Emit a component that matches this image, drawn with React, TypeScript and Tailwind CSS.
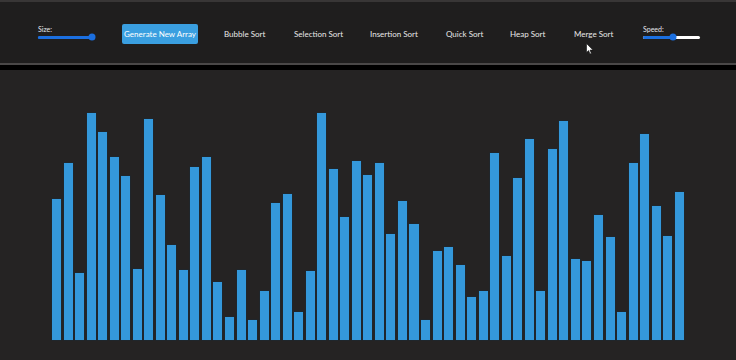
import React from "react";

const heights = [
  141, 177, 67, 227, 208, 183, 164, 71, 221, 145, 95, 70, 173, 183, 58, 23, 70, 20, 49, 137,
  146, 28, 69, 227, 171, 123, 179, 165, 177, 106, 139, 116, 20, 89, 93, 75, 43, 49, 187, 84,
  162, 201, 49, 191, 219, 81, 79, 125, 103, 28, 177, 206, 134, 104, 148,
];

// label + width of each nav item as laid out in the bar
const algorithms: [string, string][] = [
  ["Bubble Sort", "w-[40px]"],
  ["Selection Sort", "w-[46px]"],
  ["Insertion Sort", "w-[46px]"],
  ["Quick Sort", "w-[34px]"],
  ["Heap Sort", "w-[34px]"],
  ["Merge Sort", "w-[38px]"],
];

function Slider({ label, percent, fill }: { label: string; percent: number; fill: boolean }) {
  return (
    <div className="mb-[4px] flex w-[57px] flex-col gap-[3px]">
      <span className="text-[7px] leading-[8px] text-gray-200">{label}</span>
      <div className={`relative h-[3px] rounded-full ${fill ? "bg-[#1b6fe0]" : "bg-white"}`}>
        <div className="absolute inset-y-0 left-0 rounded-full bg-[#1b6fe0]" style={{ width: `${percent}%` }} />
        <div
          className="absolute top-1/2 h-[7px] w-[7px] -translate-x-1/2 -translate-y-1/2 rounded-full bg-[#1b6fe0]"
          style={{ left: `${percent}%` }}
        />
      </div>
    </div>
  );
}

export default function App() {
  return (
    <div className="relative h-[360px] w-[736px] overflow-hidden bg-[#252323]" style={{ fontFamily: "Lato, 'Noto Sans', sans-serif" }}>
      {/* Header */}
      <div className="border-t-2 border-[#383636] bg-[#1f1e1e]">
        <div className="flex h-[61px] items-center pl-[38px] pt-[2px]">
          <Slider label="Size:" percent={95} fill />
          <button className="ml-[27px] h-[20px] w-[76px] whitespace-nowrap rounded-[2px] bg-[#3a9fe0] text-[8px] text-white">
            Generate New Array
          </button>
          <div className="ml-[26px] flex gap-[30px]">
            {algorithms.map(([a, w]) => (
              <button key={a} className={`${w} whitespace-nowrap text-center text-[8px] text-[#e8e8e8]`}>
                {a}
              </button>
            ))}
          </div>
          <div className="ml-[31px]">
            <Slider label="Speed:" percent={52} fill={false} />
          </div>
        </div>
      </div>
      <div className="h-[2px] bg-[#4a4848]" />
      <div className="h-[5px] bg-black" />

      {/* Bars */}
      <div className="flex h-[270px] items-end gap-[2.5px] px-[52px]">
        {heights.map((h, i) => (
          <div key={i} className="flex-1 bg-[#3498db] shadow-[0_0_0_0.5px_#1b2a36]" style={{ height: h }} />
        ))}
      </div>

      {/* Mouse pointer */}
      <svg className="absolute left-[586px] top-[43px]" width="8" height="12" viewBox="0 0 8 12">
        <path d="M0.5 0.5 L0.5 9.5 L2.6 7.6 L4 11 L5.4 10.4 L4 7.1 L7 7.1 Z" fill="white" stroke="#111" strokeWidth="0.6" />
      </svg>
    </div>
  );
}
